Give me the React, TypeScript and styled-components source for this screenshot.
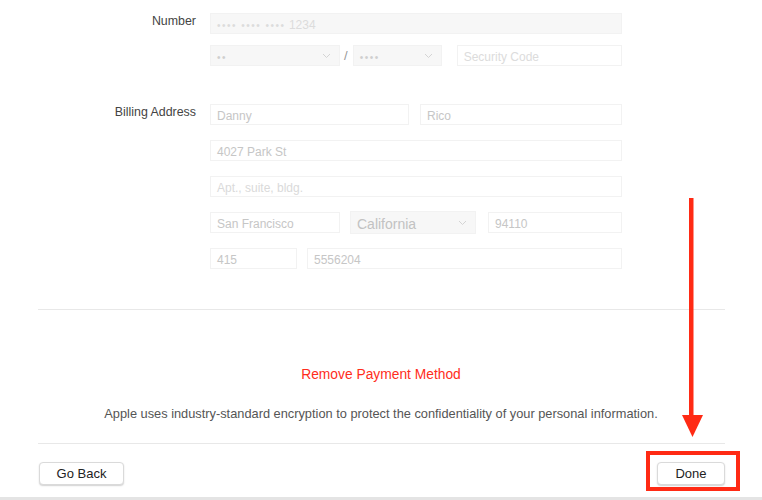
import React from "react";
import styled, { createGlobalStyle } from "styled-components";

const Global = createGlobalStyle`
  html, body { margin: 0; padding: 0; background: #fff; }
  body { font-family: "Liberation Sans", Arial, sans-serif; }
`;

const Page = styled.div`
  position: relative;
  width: 762px;
  height: 500px;
  overflow: hidden;
  background: #fff;
  display: flex;
  flex-direction: column;
`;

const Form = styled.div`
  display: flex;
  flex-direction: column;
  padding-top: 13px;
`;

const Section = styled.div<{ $gap: number; $mt?: number }>`
  display: grid;
  grid-template-columns: 196px 412px;
  column-gap: 14px;
  margin-top: ${(p) => p.$mt ?? 0}px;
  & > div:last-child { display: flex; flex-direction: column; gap: ${(p) => p.$gap}px; }
`;

const Label = styled.div`
  text-align: right;
  font-size: 12.4px;
  color: #444;
  line-height: 14px;
  padding-top: 1px;
`;

const Fields = styled.div``;

const Row = styled.div<{ $gap?: number }>`
  display: flex;
  align-items: center;
  gap: ${(p) => p.$gap ?? 11}px;
  height: 21px;
`;

const Field = styled.div<{ $w?: number; $filled?: boolean; $tone?: string; $h?: number }>`
  box-sizing: border-box;
  height: ${(p) => p.$h ?? 21}px;
  ${(p) => (p.$w ? `width: ${p.$w}px; flex: none;` : "flex: 1;")}
  border: 1px solid #f2f2f2;
  background: ${(p) => (p.$filled ? "#f7f7f7" : "#fff")};
  color: ${(p) => p.$tone ?? "#c6c6c6"};
  font-size: 12px;
  line-height: 15px;
  padding: 3px 0 0 6px;
  display: flex;
  align-items: center;
  white-space: nowrap;
`;

const Select = styled(Field)`
  justify-content: space-between;
  padding-right: 8px;
`;

const Slash = styled.span`
  color: #999;
  font-size: 13px;
  flex: none;
  margin: 0 5px 0 4px;
`;

const Dots = styled.span`
  letter-spacing: 1.5px;
  font-size: 10px;
`;

const StateText = styled.span`
  font-size: 14px;
  color: #c2c2c2;
  padding-top: 1px;
`;

const Divider = styled.div<{ $mt: number }>`
  margin: ${(p) => p.$mt}px 37px 0 38px;
  height: 1px;
  background: #e8e8e8;
`;

const RemoveLink = styled.div`
  margin-top: 57px;
  text-align: center;
  color: #ff2d1c;
  font-size: 13.8px;
  line-height: 16px;
`;

const Note = styled.div`
  margin-top: 24px;
  text-align: center;
  color: #555;
  font-size: 12.8px;
  line-height: 14px;
`;

const Footer = styled.div`
  display: flex;
  justify-content: space-between;
  padding: 18px 37px 0 39px;
`;

const Button = styled.div<{ $w: number }>`
  box-sizing: border-box;
  width: ${(p) => p.$w}px;
  height: 23px;
  border: 1px solid #dadada;
  border-radius: 4px;
  background: #fff;
  box-shadow: 0 1px 1.5px rgba(0, 0, 0, 0.18);
  font-size: 13px;
  color: #222;
  display: flex;
  align-items: center;
  justify-content: center;
`;

const BottomEdge = styled.div`
  margin-top: auto;
  height: 3px;
  background: #e4e4e4;
`;

const ArrowLayer = styled.svg`
  position: absolute;
  left: 0;
  top: 0;
  pointer-events: none;
`;

const Highlight = styled.div`
  position: absolute;
  left: 646px;
  top: 451px;
  width: 94px;
  height: 40px;
  box-sizing: border-box;
  border: 4px solid #ff2a14;
`;

const Chevron = () => (
  <svg width="9" height="6" viewBox="0 0 9 6" style={{ marginTop: -3 }}>
    <path d="M1 1l3.5 3.5L8 1" fill="none" stroke="#d4d4d4" strokeWidth="1" />
  </svg>
);

export default function App() {
  return (
    <>
      <Global />
      <Page>
        <Form>
          <Section $gap={11}>
            <Label>Number</Label>
            <Fields>
              <Row>
                <Field $filled $tone="#dcdcdc">
                  <Dots>•••• •••• ••••</Dots>&nbsp;1234
                </Field>
              </Row>
              <Row $gap={0}>
                <Select $w={130} $filled $tone="#cfcfcf">
                  <Dots>••</Dots>
                  <Chevron />
                </Select>
                <Slash>/</Slash>
                <Select $w={89} $filled $tone="#cfcfcf">
                  <Dots>••••</Dots>
                  <Chevron />
                </Select>
                <Field $w={165} $tone="#dcdcdc" style={{ marginLeft: 15 }}>
                  Security Code
                </Field>
              </Row>
            </Fields>
          </Section>
          <Section $gap={15} $mt={38}>
            <Label>Billing Address</Label>
            <Fields>
              <Row>
                <Field $w={199}>Danny</Field>
                <Field>Rico</Field>
              </Row>
              <Row>
                <Field>4027 Park St</Field>
              </Row>
              <Row>
                <Field $tone="#dadada">Apt., suite, bldg.</Field>
              </Row>
              <Row $gap={10}>
                <Field $w={130}>San Francisco</Field>
                <Select $w={126} $h={23} $filled>
                  <StateText>California</StateText>
                  <Chevron />
                </Select>
                <Field style={{ marginLeft: 2 }}>94110</Field>
              </Row>
              <Row $gap={10}>
                <Field $w={87}>415</Field>
                <Field>5556204</Field>
              </Row>
            </Fields>
          </Section>
        </Form>
        <Divider $mt={40} />
        <RemoveLink>Remove Payment Method</RemoveLink>
        <Note>Apple uses industry-standard encryption to protect the confidentiality of your personal information.</Note>
        <Divider $mt={22} />
        <Footer>
          <Button $w={85}>Go Back</Button>
          <Button $w={68}>Done</Button>
        </Footer>
        <BottomEdge />
        <ArrowLayer width="762" height="500" viewBox="0 0 762 500">
          <rect x="689" y="198" width="4.5" height="220" fill="#ff2a14" />
          <polygon points="682,415 703,415 692.5,437" fill="#ff2a14" />
        </ArrowLayer>
        <Highlight />
      </Page>
    </>
  );
}
